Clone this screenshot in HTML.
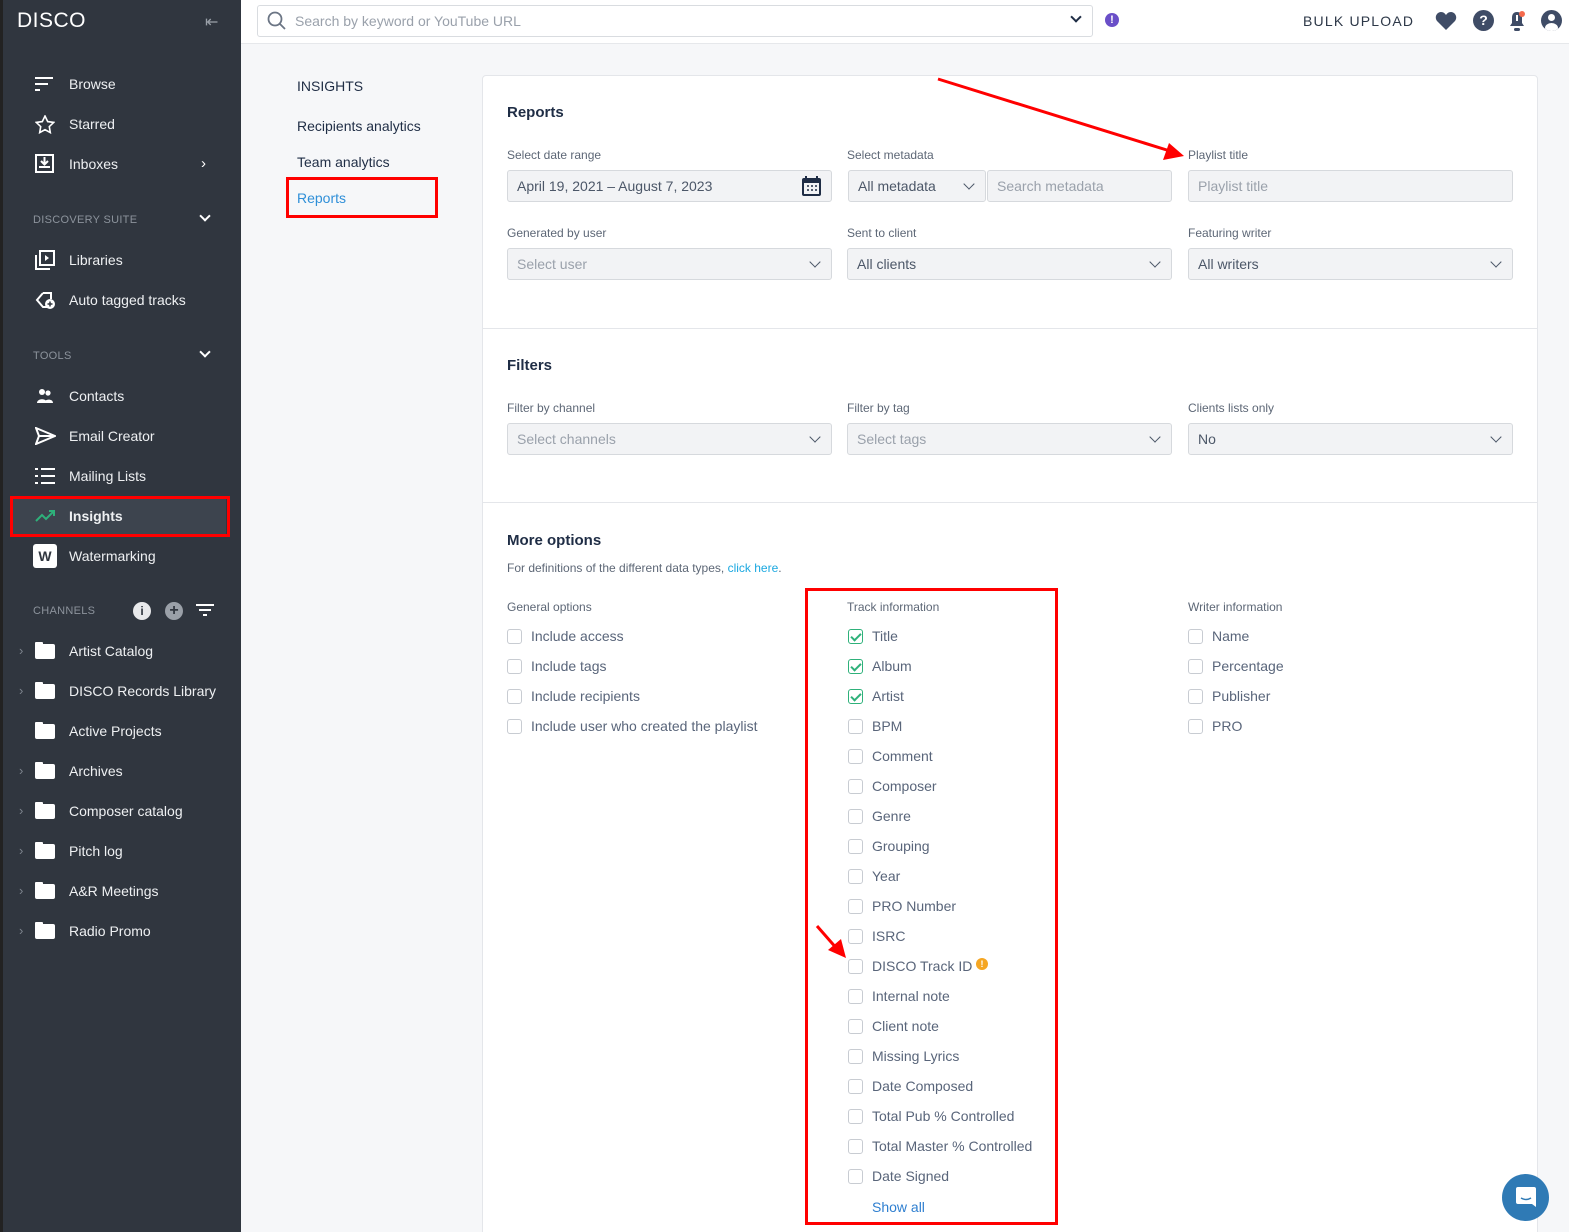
<!DOCTYPE html>
<html style="overflow:hidden"><head><meta charset="utf-8"><style>
*{box-sizing:border-box;margin:0;padding:0}
html,body{width:1569px;height:1232px;overflow:hidden}
body{background:#f6f7f9;font-family:"Liberation Sans",sans-serif;position:relative;color:#1f2d45}
.a{position:absolute}
#sb{left:0;top:0;width:241px;height:1232px;background:#30363f;box-shadow:inset 3px 0 0 #222}
.si{position:absolute;left:69px;font-size:14px;color:#eef0f2;line-height:16px}
.sh{position:absolute;left:33px;font-size:11px;color:#8c939c;letter-spacing:.3px}
.ic{position:absolute;left:35px}
.chev{position:absolute;left:19px;color:#7d848d;font-size:13px}
.fold{position:absolute;left:35px;width:20px;height:15px;background:#fff;border-radius:2px}
.fold:before{content:"";position:absolute;left:0;top:-2px;width:8px;height:4px;background:#fff;border-radius:1px 1px 0 0}
#top{left:241px;top:0;width:1328px;height:44px;background:#fff;border-bottom:1px solid #e6e8eb}
.lbl{position:absolute;font-size:12px;color:#5d6776}
.inp{position:absolute;height:32px;background:#f2f3f5;border:1px solid #d6d9dd;border-radius:3px;font-size:14px;color:#4c5768;padding:7px 9px;line-height:16px}
.ph{color:#9aa1ab}
.dd:after{content:"";position:absolute;right:12px;top:9px;width:7px;height:7px;border-right:1.6px solid #4c5768;border-bottom:1.6px solid #4c5768;transform:rotate(45deg)}
.h{position:absolute;font-size:15px;font-weight:bold;color:#1f2d45}
.cb{position:absolute;width:15px;height:15px;border:1px solid #c8ccd2;border-radius:3px;background:#fff}
.cb.on{border-color:#2eb17a}
.cb.on:after{content:"";position:absolute;left:4px;top:1px;width:4px;height:8px;border-right:2px solid #2eb17a;border-bottom:2px solid #2eb17a;transform:rotate(45deg)}
.ct{position:absolute;font-size:14px;color:#59657a}
.red{position:absolute;border:3px solid #f00}
</style></head><body>
<div id="sb" class="a">
<div class="a" style="left:17px;top:9px;font-size:21px;color:#fff;letter-spacing:.5px">DISCO</div>
<div class="a" style="left:205px;top:12px;color:#9aa0a8;font-size:16px">⇤</div>
<svg class="ic" style="top:77px" width="18" height="14"><path d="M0 1h18M0 7h13M0 13h5" stroke="#fff" stroke-width="2"/></svg>
<div class="si" style="top:76px">Browse</div>
<svg class="ic" style="top:115px" width="20" height="19"><path d="M10 1l2.7 5.6 6 .8-4.4 4.2 1 6-5.3-2.9-5.3 2.9 1-6L1.3 7.4l6-.8z" fill="none" stroke="#fff" stroke-width="1.6"/></svg>
<div class="si" style="top:116px">Starred</div>
<svg class="ic" style="top:154px" width="19" height="19"><rect x="1" y="1" width="17" height="17" fill="none" stroke="#fff" stroke-width="2"/><path d="M9.5 3v7M6 7l3.5 3.5L13 7M4 13h11" stroke="#fff" stroke-width="2" fill="none"/></svg>
<div class="si" style="top:156px">Inboxes</div>
<div class="a" style="left:201px;top:155px;color:#fff;font-size:15px">›</div>
<div class="sh" style="top:214px">DISCOVERY SUITE</div>
<div class="a" style="left:201px;top:212px;width:8px;height:8px;border-right:2px solid #fff;border-bottom:2px solid #fff;transform:rotate(45deg)"></div>
<svg class="ic" style="top:250px" width="20" height="20"><path d="M1 5v14h14" fill="none" stroke="#fff" stroke-width="2"/><rect x="5" y="1" width="14" height="14" fill="none" stroke="#fff" stroke-width="2"/><path d="M10 5v6l4-3z" fill="#fff"/></svg>
<div class="si" style="top:252px">Libraries</div>
<svg class="ic" style="top:290px" width="21" height="20"><path d="M8 3h8v6M8 3L2 10l6 7h4" fill="none" stroke="#fff" stroke-width="2"/><circle cx="15" cy="14" r="5" fill="#fff"/><path d="M15 11.5v5M12.5 14h5" stroke="#30363f" stroke-width="1.5"/></svg>
<div class="si" style="top:292px">Auto tagged tracks</div>
<div class="sh" style="top:350px">TOOLS</div>
<div class="a" style="left:201px;top:348px;width:8px;height:8px;border-right:2px solid #fff;border-bottom:2px solid #fff;transform:rotate(45deg)"></div>
<svg class="ic" style="top:388px" width="20" height="16"><circle cx="7" cy="4" r="3" fill="#fff"/><circle cx="13" cy="5" r="2.6" fill="#fff"/><path d="M2 15c0-5 10-5 10 0zM9 15c0-4 9-5 9 0z" fill="#fff"/></svg>
<div class="si" style="top:388px">Contacts</div>
<svg class="ic" style="top:427px" width="21" height="18"><path d="M1 1l19 8-19 8 3-8zM4 9h16" fill="none" stroke="#fff" stroke-width="2"/></svg>
<div class="si" style="top:428px">Email Creator</div>
<svg class="ic" style="top:468px" width="20" height="16"><path d="M0 1h3M6 1h14M0 8h3M6 8h14M0 15h3M6 15h14" stroke="#fff" stroke-width="2"/></svg>
<div class="si" style="top:468px">Mailing Lists</div>
<div class="a" style="left:10px;top:496px;width:216px;height:40px;background:#3d444e"></div>
<svg class="ic" style="top:508px" width="21" height="14"><path d="M1 13l6-6 4 4 8-8M14 3h5v5" fill="none" stroke="#2eb17a" stroke-width="2"/></svg>
<div class="si" style="top:508px;font-weight:bold">Insights</div>
<div class="a" style="left:33px;top:544px;width:24px;height:24px;background:#fff;border-radius:3px;color:#30363f;font-weight:bold;font-size:14px;text-align:center;line-height:24px">W</div>
<div class="si" style="top:548px">Watermarking</div>
<div class="sh" style="top:605px">CHANNELS</div>
<div class="a" style="left:133px;top:602px;width:18px;height:18px;border-radius:50%;background:#e8e9eb;color:#30363f;font-size:12px;font-weight:bold;text-align:center;line-height:18px">i</div>
<div class="a" style="left:165px;top:602px;width:18px;height:18px;border-radius:50%;background:#9aa0a8;color:#30363f;font-size:16px;font-weight:bold;text-align:center;line-height:18px">+</div>
<svg class="a" style="left:196px;top:604px" width="18" height="13"><path d="M0 1h18M3 6h12M7 11h4" stroke="#fff" stroke-width="2"/></svg>
<div class="chev" style="top:643px">›</div><div class="fold" style="top:644px"></div><div class="si" style="top:643px">Artist Catalog</div>
<div class="chev" style="top:683px">›</div><div class="fold" style="top:684px"></div><div class="si" style="top:683px">DISCO Records Library</div>
<div class="fold" style="top:724px"></div><div class="si" style="top:723px">Active Projects</div>
<div class="chev" style="top:763px">›</div><div class="fold" style="top:764px"></div><div class="si" style="top:763px">Archives</div>
<div class="chev" style="top:803px">›</div><div class="fold" style="top:804px"></div><div class="si" style="top:803px">Composer catalog</div>
<div class="chev" style="top:843px">›</div><div class="fold" style="top:844px"></div><div class="si" style="top:843px">Pitch log</div>
<div class="chev" style="top:883px">›</div><div class="fold" style="top:884px"></div><div class="si" style="top:883px">A&amp;R Meetings</div>
<div class="chev" style="top:923px">›</div><div class="fold" style="top:924px"></div><div class="si" style="top:923px">Radio Promo</div>
</div>
<div class="red" style="left:10px;top:496px;width:220px;height:41px"></div>

<div id="top" class="a">
<div class="a" style="left:16px;top:5px;width:836px;height:32px;border:1px solid #d9dce0;border-radius:3px;background:#fff"></div>
<svg class="a" style="left:26px;top:11px" width="20" height="20"><circle cx="8" cy="8" r="6.5" fill="none" stroke="#6b7584" stroke-width="1.8"/><path d="M13 13l5 5" stroke="#6b7584" stroke-width="1.8"/></svg>
<div class="a" style="left:54px;top:13px;font-size:14px;color:#9aa1ab">Search by keyword or YouTube URL</div>
<div class="a" style="left:831px;top:13px;width:8px;height:8px;border-right:2px solid #1f2d45;border-bottom:2px solid #1f2d45;transform:rotate(45deg)"></div>
<div class="a" style="left:864px;top:13px;width:14px;height:14px;border-radius:50%;background:#6a4fc8;color:#fff;font-size:11px;font-weight:bold;text-align:center;line-height:14px">!</div>
<div class="a" style="left:1062px;top:13px;font-size:14px;letter-spacing:1.2px;color:#2d3848">BULK UPLOAD</div>
<svg class="a" style="left:1194px;top:11px" width="22" height="20"><path d="M11 19L2 10C-1 6 2 1 6 1c2.5 0 4 1.5 5 3 1-1.5 2.5-3 5-3 4 0 7 5 4 9z" fill="#3f4c66"/></svg>
<div class="a" style="left:1232px;top:10px;width:21px;height:21px;border-radius:50%;background:#3f4c66;color:#fff;font-size:14px;font-weight:bold;text-align:center;line-height:21px">?</div>
<svg class="a" style="left:1267px;top:10px" width="18" height="22"><path d="M9 2c4 0 5 3 5 6v5l2 3H2l2-3V8c0-3 1-6 5-6z" fill="#3f4c66"/><rect x="6" y="18" width="6" height="3" rx="1.5" fill="#3f4c66"/><path d="M9 5v6" stroke="#fff" stroke-width="2"/><circle cx="14" cy="4" r="3" fill="#f56a4d"/></svg>
<div class="a" style="left:1300px;top:10px;width:21px;height:21px;border-radius:50%;background:#3f4c66;overflow:hidden"><div class="a" style="left:7px;top:4px;width:7px;height:7px;border-radius:50%;background:#fff"></div><div class="a" style="left:4px;top:13px;width:13px;height:10px;border-radius:50%;background:#fff"></div></div>
</div>

<div class="a" style="left:297px;top:78px;font-size:14px;color:#1f2d45">INSIGHTS</div>
<div class="a" style="left:297px;top:118px;font-size:14px;color:#1f2d45">Recipients analytics</div>
<div class="a" style="left:297px;top:154px;font-size:14px;color:#1f2d45">Team analytics</div>
<div class="a" style="left:297px;top:190px;font-size:14px;color:#2f8fd8">Reports</div>
<div class="red" style="left:286px;top:177px;width:152px;height:41px"></div>

<div class="a" style="left:482px;top:75px;width:1056px;height:1170px;background:#fff;border:1px solid #e4e6ea;border-radius:4px"></div>
<div class="a" style="left:483px;top:328px;width:1054px;height:1px;background:#e4e6ea"></div>
<div class="a" style="left:483px;top:502px;width:1054px;height:1px;background:#e4e6ea"></div>

<div class="h" style="left:507px;top:104px">Reports</div>
<div class="lbl" style="left:507px;top:148px">Select date range</div>
<div class="lbl" style="left:847px;top:148px">Select metadata</div>
<div class="lbl" style="left:1188px;top:148px">Playlist title</div>
<div class="inp" style="left:507px;top:170px;width:325px">April 19, 2021 – August 7, 2023</div>
<svg class="a" style="left:801px;top:175px" width="21" height="22"><rect x="1" y="3" width="19" height="18" rx="2" fill="#1f2d45"/><rect x="3" y="8" width="15" height="11" fill="#f2f3f5"/><path d="M5 1v4M16 1v4" stroke="#1f2d45" stroke-width="2"/><path d="M6 11h2M10 11h2M14 11h2M6 15h2M10 15h2M14 15h2" stroke="#1f2d45" stroke-width="1.5"/></svg>
<div class="inp dd" style="left:848px;top:170px;width:138px">All metadata</div>
<div class="inp ph" style="left:987px;top:170px;width:185px">Search metadata</div>
<div class="inp ph" style="left:1188px;top:170px;width:325px">Playlist title</div>
<div class="lbl" style="left:507px;top:226px">Generated by user</div>
<div class="lbl" style="left:847px;top:226px">Sent to client</div>
<div class="lbl" style="left:1188px;top:226px">Featuring writer</div>
<div class="inp dd ph" style="left:507px;top:248px;width:325px">Select user</div>
<div class="inp dd" style="left:847px;top:248px;width:325px">All clients</div>
<div class="inp dd" style="left:1188px;top:248px;width:325px">All writers</div>

<div class="h" style="left:507px;top:357px">Filters</div>
<div class="lbl" style="left:507px;top:401px">Filter by channel</div>
<div class="lbl" style="left:847px;top:401px">Filter by tag</div>
<div class="lbl" style="left:1188px;top:401px">Clients lists only</div>
<div class="inp dd ph" style="left:507px;top:423px;width:325px">Select channels</div>
<div class="inp dd ph" style="left:847px;top:423px;width:325px">Select tags</div>
<div class="inp dd" style="left:1188px;top:423px;width:325px">No</div>

<div class="h" style="left:507px;top:532px">More options</div>
<div class="lbl" style="left:507px;top:561px">For definitions of the different data types, <span style="color:#1ba8e0">click here</span>.</div>
<div class="lbl" style="left:507px;top:600px">General options</div>
<div class="lbl" style="left:847px;top:600px">Track information</div>
<div class="lbl" style="left:1188px;top:600px">Writer information</div>

<div class="cb" style="left:507px;top:629px"></div><div class="ct" style="left:531px;top:628px">Include access</div>
<div class="cb" style="left:507px;top:659px"></div><div class="ct" style="left:531px;top:658px">Include tags</div>
<div class="cb" style="left:507px;top:689px"></div><div class="ct" style="left:531px;top:688px">Include recipients</div>
<div class="cb" style="left:507px;top:719px"></div><div class="ct" style="left:531px;top:718px">Include user who created the playlist</div>

<div class="cb" style="left:1188px;top:629px"></div><div class="ct" style="left:1212px;top:628px">Name</div>
<div class="cb" style="left:1188px;top:659px"></div><div class="ct" style="left:1212px;top:658px">Percentage</div>
<div class="cb" style="left:1188px;top:689px"></div><div class="ct" style="left:1212px;top:688px">Publisher</div>
<div class="cb" style="left:1188px;top:719px"></div><div class="ct" style="left:1212px;top:718px">PRO</div>

<div class="cb on" style="left:848px;top:629px"></div><div class="ct" style="left:872px;top:628px">Title</div>
<div class="cb on" style="left:848px;top:659px"></div><div class="ct" style="left:872px;top:658px">Album</div>
<div class="cb on" style="left:848px;top:689px"></div><div class="ct" style="left:872px;top:688px">Artist</div>
<div class="cb" style="left:848px;top:719px"></div><div class="ct" style="left:872px;top:718px">BPM</div>
<div class="cb" style="left:848px;top:749px"></div><div class="ct" style="left:872px;top:748px">Comment</div>
<div class="cb" style="left:848px;top:779px"></div><div class="ct" style="left:872px;top:778px">Composer</div>
<div class="cb" style="left:848px;top:809px"></div><div class="ct" style="left:872px;top:808px">Genre</div>
<div class="cb" style="left:848px;top:839px"></div><div class="ct" style="left:872px;top:838px">Grouping</div>
<div class="cb" style="left:848px;top:869px"></div><div class="ct" style="left:872px;top:868px">Year</div>
<div class="cb" style="left:848px;top:899px"></div><div class="ct" style="left:872px;top:898px">PRO Number</div>
<div class="cb" style="left:848px;top:929px"></div><div class="ct" style="left:872px;top:928px">ISRC</div>
<div class="cb" style="left:848px;top:959px"></div><div class="ct" style="left:872px;top:958px">DISCO Track ID</div>
<div class="a" style="left:976px;top:958px;width:12px;height:12px;border-radius:50%;background:#f5a623;color:#fff;font-size:9px;font-weight:bold;text-align:center;line-height:12px">!</div>
<div class="cb" style="left:848px;top:989px"></div><div class="ct" style="left:872px;top:988px">Internal note</div>
<div class="cb" style="left:848px;top:1019px"></div><div class="ct" style="left:872px;top:1018px">Client note</div>
<div class="cb" style="left:848px;top:1049px"></div><div class="ct" style="left:872px;top:1048px">Missing Lyrics</div>
<div class="cb" style="left:848px;top:1079px"></div><div class="ct" style="left:872px;top:1078px">Date Composed</div>
<div class="cb" style="left:848px;top:1109px"></div><div class="ct" style="left:872px;top:1108px">Total Pub % Controlled</div>
<div class="cb" style="left:848px;top:1139px"></div><div class="ct" style="left:872px;top:1138px">Total Master % Controlled</div>
<div class="cb" style="left:848px;top:1169px"></div><div class="ct" style="left:872px;top:1168px">Date Signed</div>
<div class="ct" style="left:872px;top:1199px;color:#2f7fd0">Show all</div>
<div class="red" style="left:805px;top:588px;width:253px;height:637px"></div>

<svg class="a" style="left:0;top:0" width="1569" height="1232"><path d="M938 79L1170 151" stroke="#f00" stroke-width="3"/><path d="M1184 156L1163 160L1169 143z" fill="#f00"/><path d="M817 926L838 950" stroke="#f00" stroke-width="3"/><path d="M846 958L828 950L841 939z" fill="#f00"/></svg>

<div class="a" style="left:1502px;top:1174px;width:47px;height:47px;border-radius:50%;background:#2f7ab5"></div>
<svg class="a" style="left:1515px;top:1186px" width="22" height="23"><path d="M3 1h16a2 2 0 012 2v18l-4-3H3a2 2 0 01-2-2V3a2 2 0 012-2z" fill="#fff"/><path d="M6 12q5 3 10 0" stroke="#2f7ab5" stroke-width="1.5" fill="none"/></svg>
</body></html>
